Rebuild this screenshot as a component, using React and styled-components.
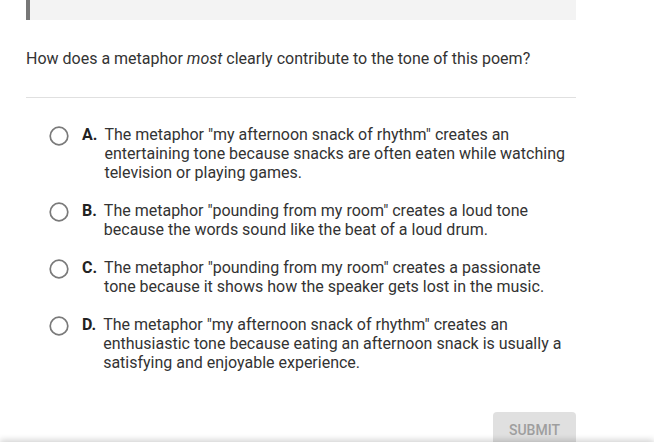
import React from 'react';
import styled, { createGlobalStyle } from 'styled-components';

const GlobalStyle = createGlobalStyle`
  body {
    margin: 0;
    background: #fff;
    font-family: Roboto, "Liberation Sans", sans-serif;
    color: #333;
    overflow: hidden;
  }
`;

const options = [
  {
    letter: 'A.',
    text: 'The metaphor "my afternoon snack of rhythm" creates an entertaining tone because snacks are often eaten while watching television or playing games.',
  },
  {
    letter: 'B.',
    text: 'The metaphor "pounding from my room" creates a loud tone because the words sound like the beat of a loud drum.',
  },
  {
    letter: 'C.',
    text: 'The metaphor "pounding from my room" creates a passionate tone because it shows how the speaker gets lost in the music.',
  },
  {
    letter: 'D.',
    text: 'The metaphor "my afternoon snack of rhythm" creates an enthusiastic tone because eating an afternoon snack is usually a satisfying and enjoyable experience.',
  },
];

function App() {
  return (
    <>
      <GlobalStyle />
      <Page>
        <Passage />
        <Question>
          How does a metaphor <em>most</em> clearly contribute to the tone of this poem?
        </Question>
        <Divider />
        <OptionList>
          {options.map((o) => (
            <Option key={o.letter}>
              <Radio viewBox="0 0 20 20">
                <circle cx="10" cy="10" r="8.8" fill="none" stroke="#7a7a7a" strokeWidth="1.7" />
              </Radio>
              <Letter>{o.letter}</Letter>
              <OptionText>{o.text}</OptionText>
            </Option>
          ))}
        </OptionList>
        <Actions>
          <SubmitButton disabled>SUBMIT</SubmitButton>
        </Actions>
      </Page>
      <FooterShadow />
    </>
  );
}

const Page = styled.div`
  width: 550px;
  margin-left: 26px;
  display: flex;
  flex-direction: column;
`;

const Passage = styled.div`
  height: 20px;
  background: #f3f3f3;
  border-left: 4px solid #777;
`;

const Question = styled.p`
  margin: 29px 0 0;
  font-size: 16px;
  line-height: 19px;
  color: #333;

  em {
    font-style: italic;
  }
`;

const Divider = styled.div`
  height: 1px;
  background: #e0e0e0;
  margin-top: 29px;
`;

const OptionList = styled.div`
  display: flex;
  flex-direction: column;
  gap: 19px;
  margin-top: 27px;
  padding: 0 6px 0 23px;
`;

const Option = styled.label`
  display: flex;
  align-items: flex-start;
  font-size: 16px;
  line-height: 19px;
  cursor: pointer;
`;

const Radio = styled.svg`
  flex: none;
  width: 20px;
  height: 20px;
  margin-top: 1px;
  margin-right: 13px;
`;

const Letter = styled.span`
  flex: none;
  font-weight: 700;
  margin-right: 7px;
  color: #222;
`;

const OptionText = styled.span`
  flex: 1;
  color: #333;
`;

const Actions = styled.div`
  display: flex;
  justify-content: flex-end;
  margin-top: 40px;
`;

const SubmitButton = styled.button`
  width: 83px;
  height: 36px;
  border: none;
  border-radius: 4px;
  background: #e0e0e0;
  color: #9e9e9e;
  font-family: Roboto, "Liberation Sans", sans-serif;
  font-size: 14px;
  font-weight: 500;
  padding: 0;
`;

const FooterShadow = styled.div`
  position: fixed;
  left: 0;
  right: 0;
  bottom: -10px;
  height: 10px;
  background: #fff;
  box-shadow: 0 -2px 6px rgba(0, 0, 0, 0.18);
`;

export default App;
